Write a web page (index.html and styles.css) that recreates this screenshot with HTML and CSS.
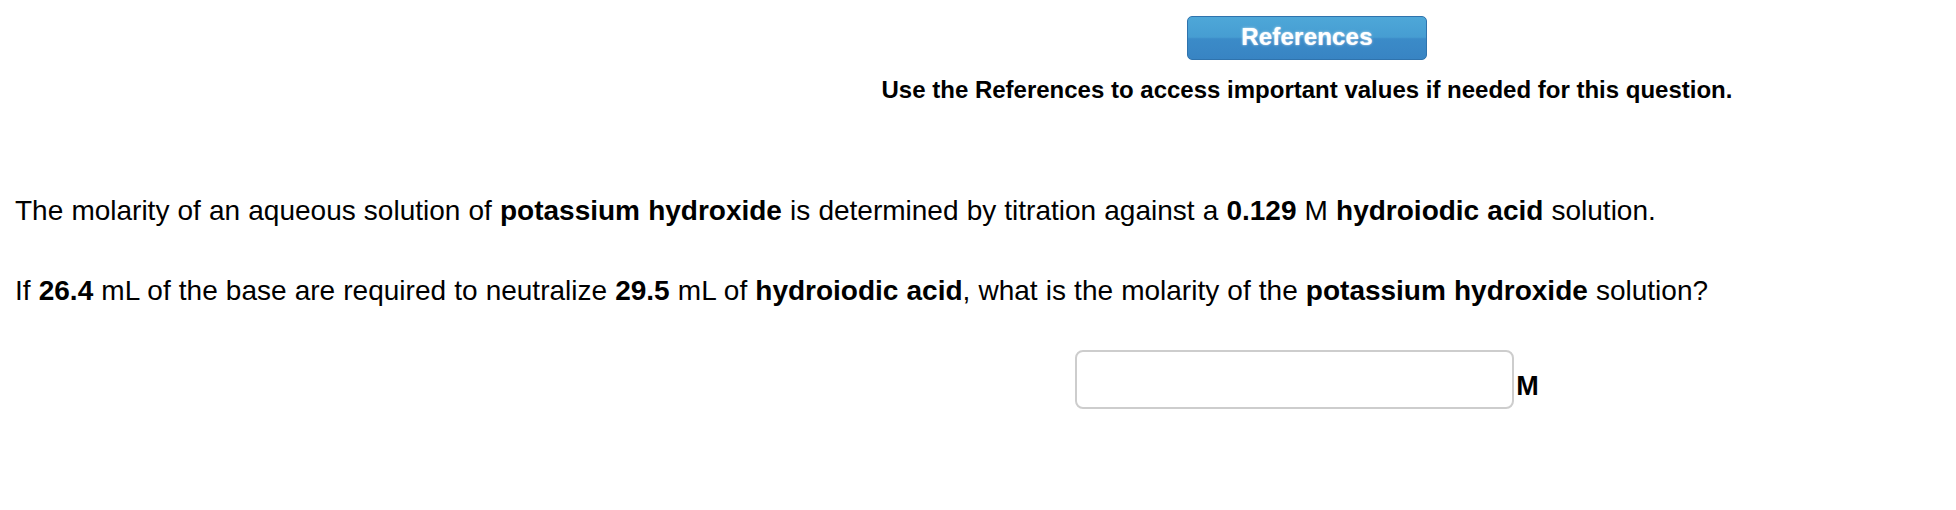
FILE: index.html
```html
<!DOCTYPE html>
<html lang="en">
<head>
<meta charset="utf-8">
<title>Question</title>
<link rel="stylesheet" href="styles.css">
</head>
<body>
<main class="page">
  <div class="col top">
    <button class="ref-btn" type="button">References</button>
    <p class="note">Use the References to access important values if needed for this question.</p>
  </div>
  <p class="q q1">The molarity of an aqueous solution of <b>potassium hydroxide</b> is determined by titration against a <b>0.129</b> M <b>hydroiodic acid</b> solution.</p>
  <p class="q q2">If <b>26.4</b> mL of the base are required to neutralize <b>29.5</b> mL of <b>hydroiodic acid</b>, what is the molarity of the <b>potassium hydroxide</b> solution?</p>
  <div class="col answer">
    <div class="answer-row">
      <input class="answer-input" type="text" aria-label="answer">
      <span class="unit">M</span>
    </div>
  </div>
</main>
</body>
</html>
```

FILE: styles.css
```css
html, body {
  margin: 0;
  padding: 0;
  background: #ffffff;
}
body {
  font-family: "Liberation Sans", Arial, Helvetica, sans-serif;
  color: #000;
}
.page {
  width: 1956px;
  height: 510px;
}
.col {
  width: 1298px;
  margin-left: auto;
  display: flex;
  flex-direction: column;
  align-items: center;
}
.top {
  padding-top: 16px;
}
.ref-btn {
  box-sizing: border-box;
  width: 240px;
  height: 44px;
  margin: 0;
  padding: 0 0 2px 0;
  border: 1px solid #2f73ad;
  border-radius: 5px;
  background: linear-gradient(to bottom, #4ea7d8 0%, #469dd2 48%, #3b8bc8 52%, #3884c3 100%);
  color: #fff;
  font-family: "Liberation Sans", Arial, sans-serif;
  font-weight: bold;
  font-size: 24px;
  letter-spacing: 0.2px;
  text-shadow: 0 0 3px rgba(255,255,255,0.55), 0 0 1px rgba(255,255,255,0.6);
  display: flex;
  align-items: center;
  justify-content: center;
}
.note {
  margin: 16px 0 0 0;
  font-size: 24px;
  line-height: 28px;
  font-weight: bold;
}
.q {
  margin: 0;
  padding-left: 15px;
  font-size: 28px;
  line-height: 36px;
  word-spacing: 0.35px;
}
.q1 {
  margin-top: 89px;
}
.q2 {
  margin-top: 44px;
}
.answer {
  margin-top: 41px;
}
.answer-row {
  display: flex;
  align-items: flex-end;
  gap: 2px;
}
.answer-input {
  box-sizing: border-box;
  width: 439px;
  height: 59px;
  margin: 0;
  border: 2px solid #cdcdcd;
  border-radius: 8px;
  background: #fff;
  outline: none;
}
.unit {
  font-size: 27px;
  line-height: 27px;
  font-weight: bold;
  margin-bottom: 9px;
}
```
